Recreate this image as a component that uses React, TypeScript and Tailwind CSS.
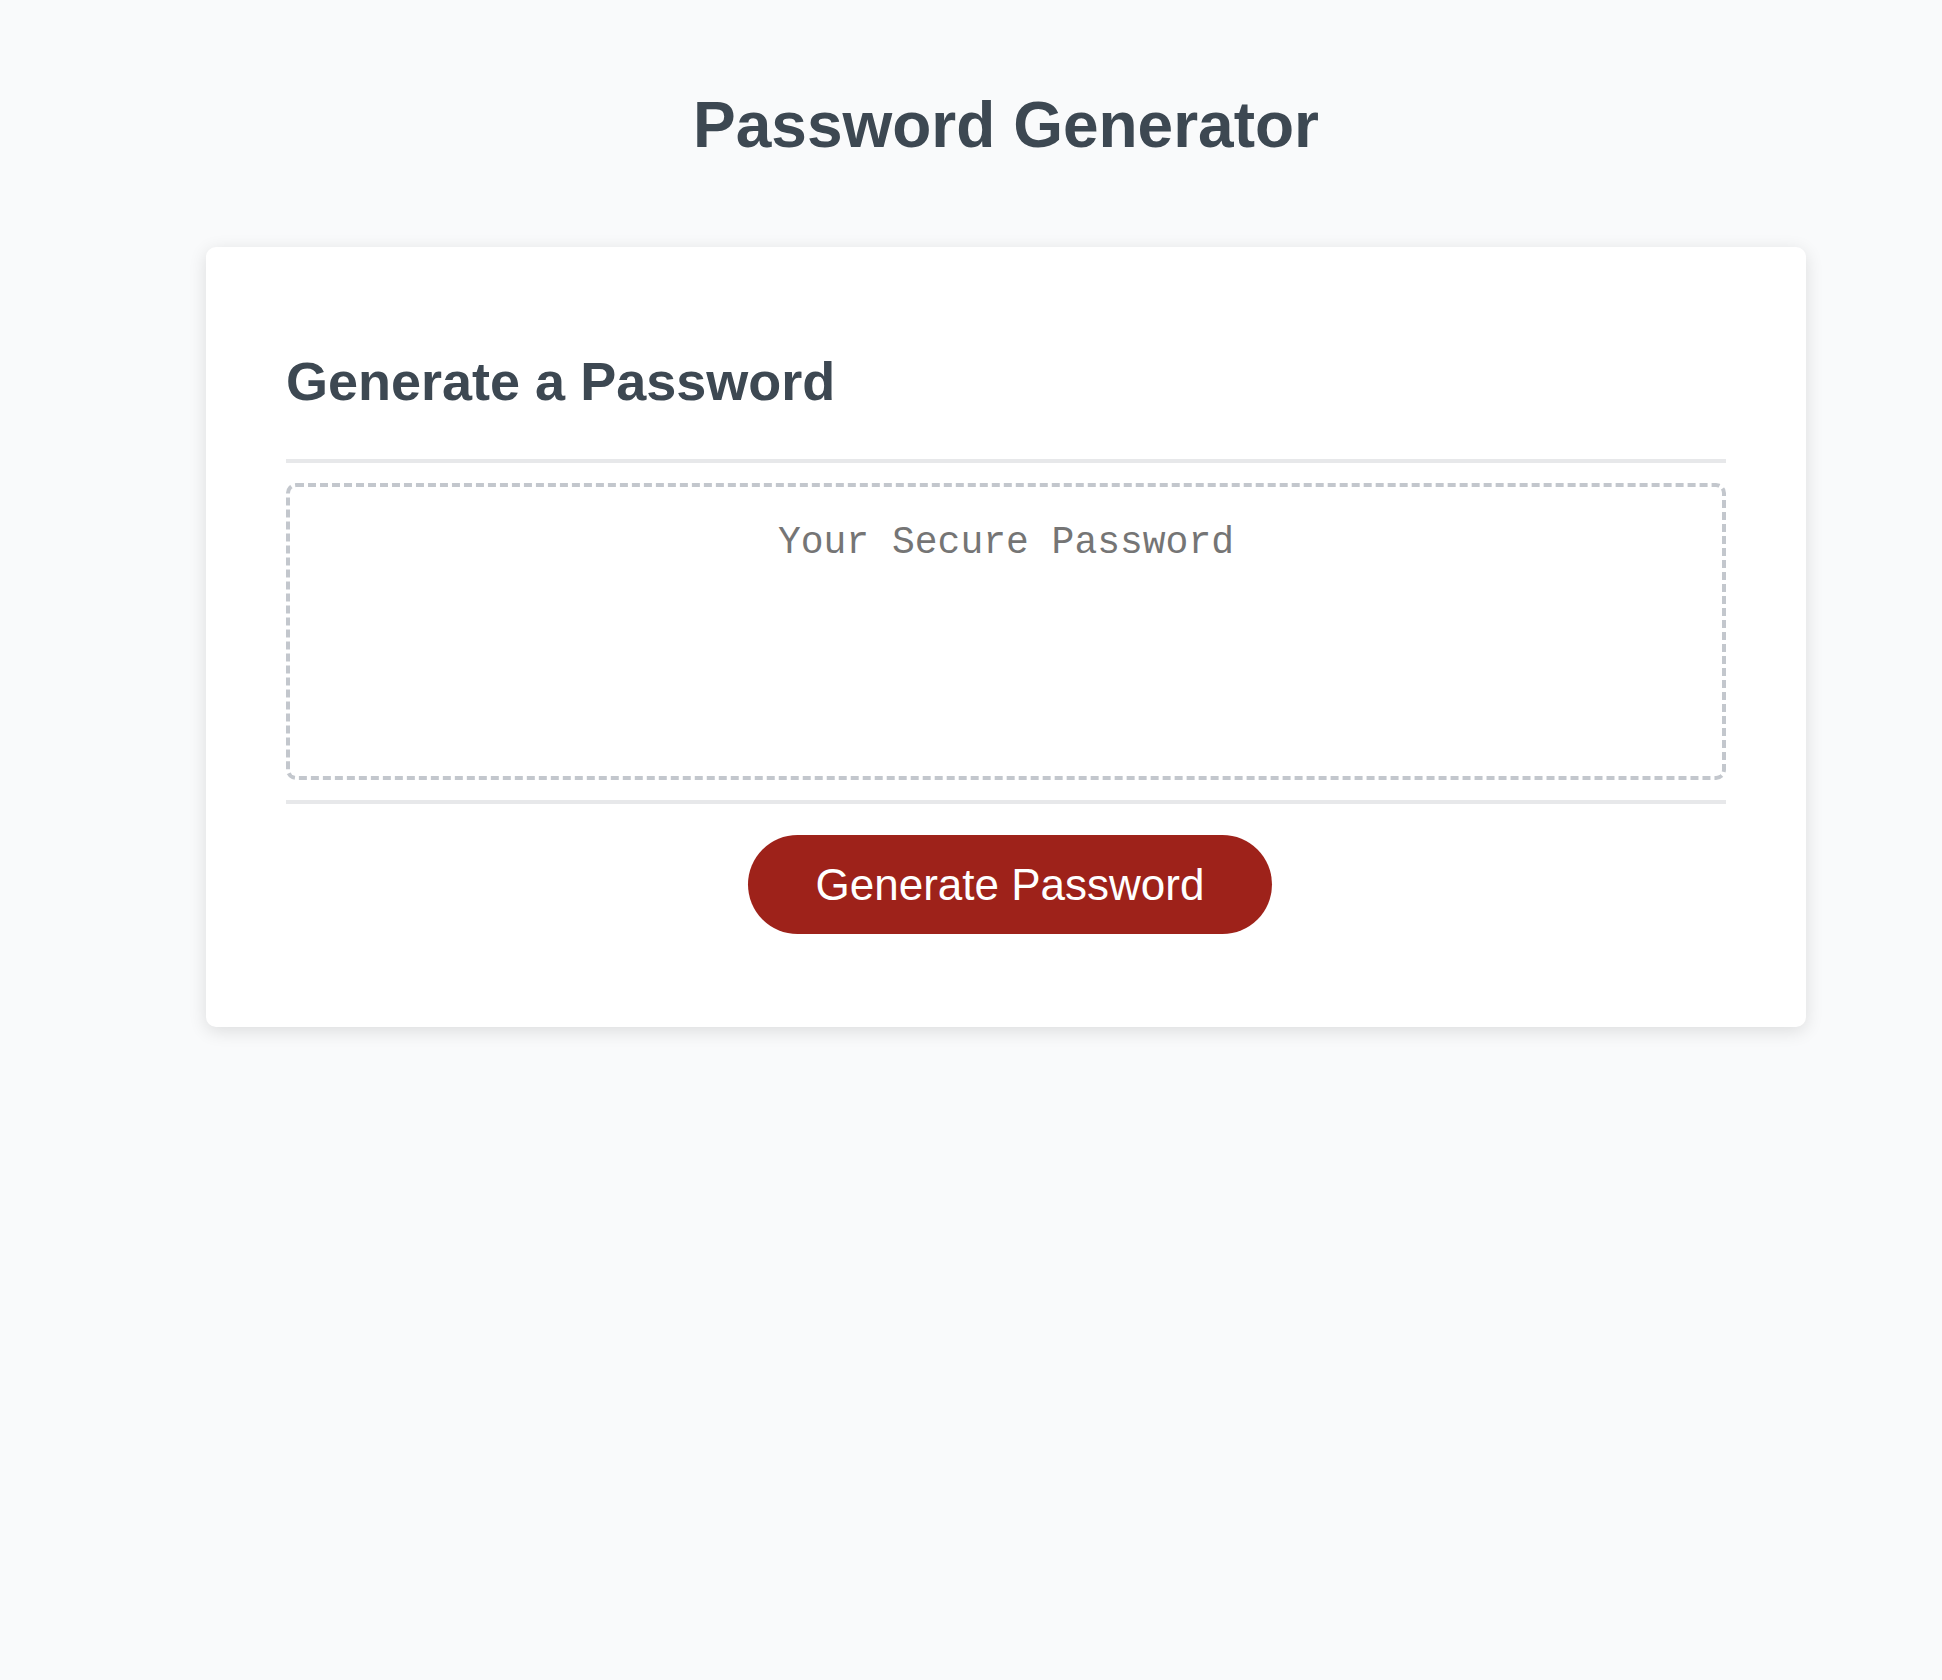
import { useState } from "react";

const CHARS = "ABCDEFGHIJKLMNOPQRSTUVWXYZabcdefghijklmnopqrstuvwxyz0123456789!@#$%^&*";

function makePassword(len: number) {
  let out = "";
  for (let i = 0; i < len; i++) {
    out += CHARS[Math.floor(Math.random() * CHARS.length)];
  }
  return out;
}

export default function App() {
  const [password, setPassword] = useState("");

  return (
    <div className="min-h-screen w-full bg-[#f9fafb] font-['Liberation_Sans',Arial,sans-serif] text-[#3d4852]">
      <div className="ml-[206px] w-[1600px] pt-[88px]">
        <h1 className="text-center text-[64px] leading-[74px] font-bold">Password Generator</h1>

        {/* Card */}
        <div className="mt-[85px] rounded-[10px] bg-white px-[80px] pt-[103px] pb-[93px] shadow-[0_4px_18px_rgba(0,0,0,0.12)]">
          <h2 className="text-[54px] leading-[62px] font-bold">Generate a Password</h2>

          <div className="mt-[47px] h-[4px] bg-[#e7e8ea]" />

          <textarea
            readOnly
            value={password}
            placeholder="Your Secure Password"
            className="mt-[20px] block h-[297px] w-full resize-none rounded-[10px] border-[4px] border-dashed border-[#c3c7cd] bg-white px-[20px] pt-[34px] text-center font-['Liberation_Mono','Courier_New',monospace] text-[38px] leading-[44px] text-[#3d4852] outline-none placeholder:text-[#757575]"
          />

          <div className="mt-[20px] h-[4px] bg-[#e7e8ea]" />

          <div className="mt-[31px] flex justify-center pl-[8px]">
            <button
              onClick={() => setPassword(makePassword(16))}
              className="flex h-[99px] items-center justify-center rounded-full bg-[#9e221a] px-[68px] text-[44px] text-white"
            >
              Generate Password
            </button>
          </div>
        </div>
      </div>
    </div>
  );
}
